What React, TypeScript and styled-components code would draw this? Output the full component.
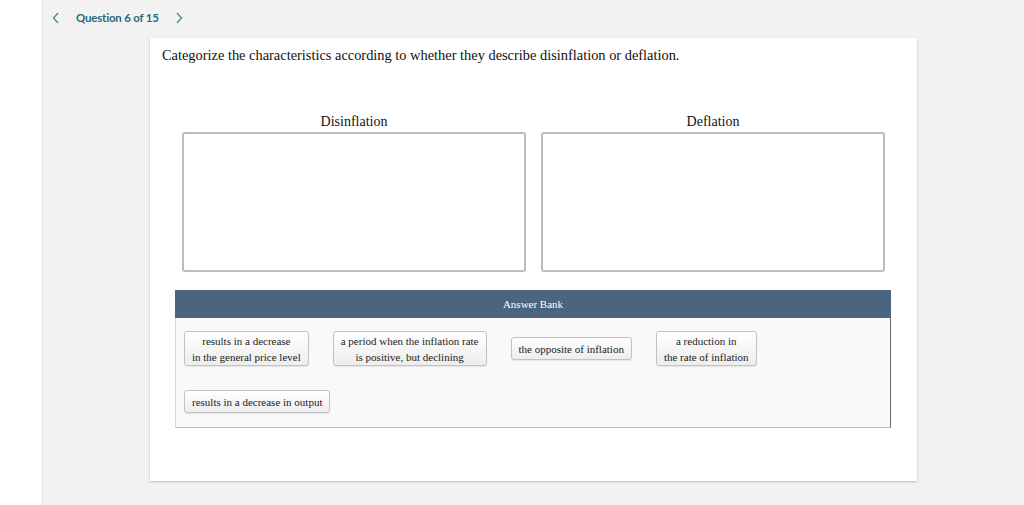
import { createGlobalStyle } from 'styled-components'
import styled from 'styled-components'

const GlobalStyle = createGlobalStyle`
  html, body {
    margin: 0;
    padding: 0;
    background: #f2f2f2;
  }
  * {
    box-sizing: border-box;
  }
`

const serif = `"Liberation Serif", "Times New Roman", serif`

const Page = styled.div`
  display: flex;
  width: 1024px;
  height: 505px;
  overflow: hidden;
  background: #f2f2f2;
`

const Sidebar = styled.aside`
  width: 43px;
  flex-shrink: 0;
  background: #fff;
  border-right: 1px solid #e3e3e3;
`

const Main = styled.main`
  flex: 1;
  display: flex;
  flex-direction: column;
`

const Nav = styled.nav`
  height: 38px;
  display: flex;
  align-items: center;
  padding: 0 0 3px 6px;
  font-family: Lato, "Open Sans", sans-serif;
  font-size: 11.5px;
  font-weight: 700;
  color: #2b6a80;
`

const Arrow = styled.button`
  border: 0;
  background: none;
  padding: 0;
  width: 12px;
  height: 14px;
  display: flex;
  align-items: center;
  justify-content: center;
  color: #4f8396;
`

const NavTitle = styled.span`
  margin: 0 15px 0 15px;
  letter-spacing: -0.2px;
`

const Card = styled.section`
  margin-left: 107px;
  width: 767px;
  height: 443px;
  background: #fff;
  box-shadow: 0 1px 2px rgba(0, 0, 0, 0.22);
  padding: 8px 26px 0 12px;
  font-family: ${serif};
  color: #111;
`

const Prompt = styled.p`
  margin: 0;
  font-size: 14.4px;
  line-height: 18px;
`

const Bins = styled.div`
  display: grid;
  grid-template-columns: 344px 344px;
  gap: 15px;
  margin: 50px 0 0 20px;
`

const Bin = styled.div`
  display: flex;
  flex-direction: column;
  align-items: center;
`

const BinLabel = styled.div`
  font-size: 14px;
  line-height: 16px;
  margin-bottom: 2px;
`

const DropZone = styled.div`
  width: 100%;
  height: 140px;
  border: 2px solid #bcbcbc;
  border-radius: 3px;
  background: #fff;
`

const Bank = styled.div`
  margin: 18px 0 0 13px;
  width: 716px;
`

const BankHeader = styled.div`
  height: 28px;
  background: #4b6581;
  color: #fff;
  font-size: 11px;
  display: flex;
  align-items: center;
  justify-content: center;
`

const BankBody = styled.div`
  height: 110px;
  background: #f9f9f9;
  border-left: 1px solid #d6d6d6;
  border-right: 1px solid #6a6a6a;
  border-bottom: 1px solid #b8b8b8;
  padding: 13px 8px;
  display: flex;
  flex-wrap: wrap;
  align-items: center;
  align-content: flex-start;
  gap: 24px;
`

const Chip = styled.div`
  min-height: 23px;
  display: flex;
  flex-direction: column;
  justify-content: center;
  border: 1px solid #c2c2c2;
  border-radius: 3px;
  background: linear-gradient(#ffffff, #ededed);
  box-shadow: 0 1px 1px rgba(0, 0, 0, 0.08);
  font-size: 11px;
  line-height: 16px;
  padding: 1px 7px 0;
  text-align: center;
  color: #222;
  white-space: nowrap;
`

const Chevron = ({ dir }: { dir: 'left' | 'right' }) => (
  <svg width="7" height="12" viewBox="0 0 7 12" fill="none">
    <path
      d={dir === 'left' ? 'M6 1 L1.5 6 L6 11' : 'M1 1 L5.5 6 L1 11'}
      stroke="currentColor"
      strokeWidth="1.3"
    />
  </svg>
)

const answers = [
  ['results in a decrease', 'in the general price level'],
  ['a period when the inflation rate', 'is positive, but declining'],
  ['the opposite of inflation'],
  ['a reduction in', 'the rate of inflation'],
  ['results in a decrease in output'],
]

export default function App() {
  return (
    <>
      <GlobalStyle />
      <Page>
        <Sidebar />
        <Main>
          <Nav>
            <Arrow aria-label="previous">
              <Chevron dir="left" />
            </Arrow>
            <NavTitle>Question 6 of 15</NavTitle>
            <Arrow aria-label="next">
              <Chevron dir="right" />
            </Arrow>
          </Nav>
          <Card>
            <Prompt>
              Categorize the characteristics according to whether they describe
              disinflation or deflation.
            </Prompt>
            <Bins>
              {['Disinflation', 'Deflation'].map((name) => (
                <Bin key={name}>
                  <BinLabel>{name}</BinLabel>
                  <DropZone />
                </Bin>
              ))}
            </Bins>
            <Bank>
              <BankHeader>Answer Bank</BankHeader>
              <BankBody>
                {answers.map((lines) => (
                  <Chip key={lines.join(' ')}>
                    {lines.map((line, i) => (
                      <div key={i}>{line}</div>
                    ))}
                  </Chip>
                ))}
              </BankBody>
            </Bank>
          </Card>
        </Main>
      </Page>
    </>
  )
}
